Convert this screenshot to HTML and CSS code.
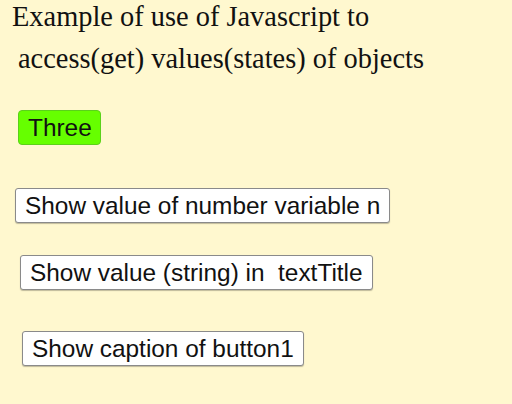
FILE: index.html
```html
<!DOCTYPE html>
<html>
<head>
    <title>Javascript values</title>
    <link rel="stylesheet" href="styles.css">
</head>
<body>
    <div class="applet">
        <div class="title">
            <div class="line1">Example of use of Javascript to</div>
            <div class="line2">access(get) values(states) of objects</div>
        </div>
        <button class="btn green" id="button1">Three</button>
        <button class="btn b2">Show value of number variable n</button>
        <button class="btn b3">Show value (string) in&nbsp; textTitle</button>
        <button class="btn b4">Show caption of button1</button>
    </div>
</body>
</html>
```

FILE: styles.css
```css
body {
    margin: 0;
    background-color: #fff8cf;
}

.applet {
    width: 512px;
    height: 404px;
    display: flex;
    flex-direction: column;
    align-items: flex-start;
}

.title {
    font-family: "Liberation Serif", serif;
    font-size: 28.4px;
    color: #111;
    line-height: 42px;
    margin-top: -4px;
}

.line1 {
    margin-left: 12px;
}

.line2 {
    margin-left: 18px;
}

.btn {
    font-family: "Liberation Sans", Arial, sans-serif;
    font-size: 24.4px;
    color: #111;
    background: #fff;
    border: 1px solid #8a8a8a;
    border-radius: 3px;
    height: 35px;
    padding: 0 9px;
    box-shadow: 0 1px 1px rgba(0, 0, 0, 0.25);
}

.green {
    background: #66ff00;
    border-color: #5bd11a;
    border-radius: 4px;
    margin: 30px 0 0 18px;
    padding: 0 8px 0 9px;
    box-shadow: none;
}

.b2 {
    margin: 43px 0 0 15px;
}

.b3 {
    margin: 32px 0 0 20px;
}

.b4 {
    margin: 41px 0 0 22px;
}
```
